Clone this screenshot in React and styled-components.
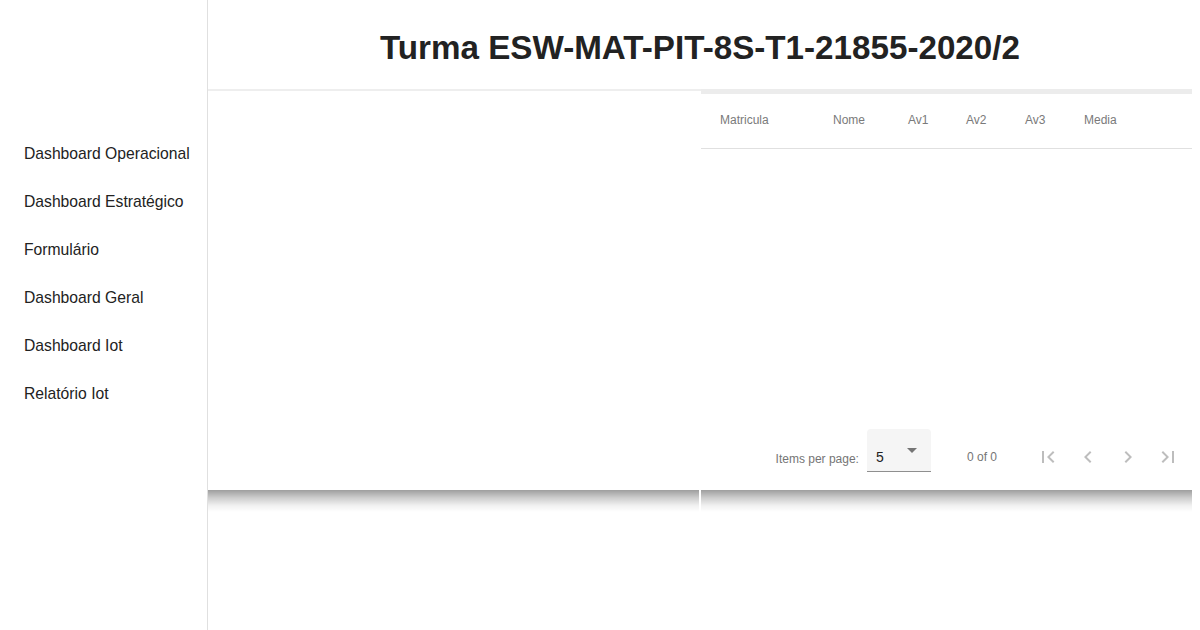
import React from "react";
import styled, { createGlobalStyle } from "styled-components";

const GlobalStyle = createGlobalStyle`
  html, body {
    margin: 0;
    padding: 0;
    background: #fff;
    font-family: "Liberation Sans", Arial, sans-serif;
  }
`;

const Layout = styled.div`
  display: flex;
  width: 1200px;
  height: 630px;
  overflow: hidden;
`;

const Sidebar = styled.nav`
  width: 207px;
  flex-shrink: 0;
  border-right: 1px solid #e0e0e0;
  padding-top: 130px;
  box-sizing: content-box;
`;

const NavItem = styled.a`
  display: flex;
  align-items: center;
  height: 48px;
  padding-left: 24px;
  font-size: 15.7px;
  color: #222;
  text-decoration: none;
`;

const Main = styled.main`
  flex: 1;
  padding-right: 8px;
  display: flex;
  flex-direction: column;
`;

const Header = styled.header`
  height: 89px;
  border-bottom: 2px solid #eeeeee;
  display: flex;
  align-items: center;
  justify-content: center;
`;

const Title = styled.h1`
  margin: 0;
  font-size: 33.2px;
  font-weight: 700;
  color: #222;
  padding-top: 6px;
`;

const Row = styled.div`
  display: flex;
  gap: 2px;
`;

const Card = styled.section`
  flex: 1;
  position: relative;
  height: ${(p) => (p.$table ? 401 : 399)}px;
  margin-top: ${(p) => (p.$table ? -2 : 0)}px;
  background: #fff;
  display: flex;
  flex-direction: column;
  box-sizing: border-box;
  border-top: ${(p) => (p.$table ? "5px solid #ececec" : "none")};
  padding-bottom: 5px;

  &::after {
    content: "";
    position: absolute;
    top: 100%;
    left: 0;
    right: 0;
    height: 22px;
    background: linear-gradient(
      rgba(0, 0, 0, 0.38),
      rgba(0, 0, 0, 0.2) 35%,
      rgba(0, 0, 0, 0.06) 70%,
      rgba(0, 0, 0, 0)
    );
  }
`;

const HeadRow = styled.div`
  display: flex;
  align-items: center;
  height: 55px;
  padding-left: 19px;
  padding-bottom: 3px;
  box-sizing: border-box;
  border-bottom: 1px solid #e0e0e0;
`;

const HeadCell = styled.div`
  width: ${(p) => p.$w}px;
  font-size: 12px;
  color: #7a7a7a;
`;

const Body = styled.div`
  flex: 1;
`;

const Paginator = styled.div`
  height: 56px;
  display: flex;
  align-items: center;
  justify-content: flex-end;
  padding-right: 4px;
  font-size: 12px;
  color: #757575;
`;

const PageLabel = styled.span`
  margin-right: 8px;
  padding-top: 3px;
`;

const Select = styled.div`
  width: 64px;
  height: 43px;
  box-sizing: border-box;
  background: #f5f5f5;
  border-radius: 4px 4px 0 0;
  border-bottom: 1px solid #8f8f8f;
  position: relative;
  margin-top: -13px;
  padding: 20px 0 0 9px;
  font-size: 14px;
  color: #222;
`;

const Arrow = styled.span`
  position: absolute;
  right: 14px;
  top: 19px;
  width: 0;
  height: 0;
  border-left: 5px solid transparent;
  border-right: 5px solid transparent;
  border-top: 5px solid #757575;
`;

const Range = styled.span`
  margin: 0 31px 0 36px;
`;

const IconButton = styled.button`
  width: 40px;
  height: 40px;
  border: none;
  background: none;
  padding: 0;
  display: flex;
  align-items: center;
  justify-content: center;
  color: rgba(0, 0, 0, 0.26);
`;

const Icon = ({ d }) => (
  <svg width="24" height="24" viewBox="0 0 24 24" fill="currentColor">
    <path d={d} />
  </svg>
);

const icons = [
  "M18.41 16.59L13.82 12l4.59-4.59L17 6l-6 6 6 6zM6 6h2v12H6z",
  "M15.41 7.41L14 6l-6 6 6 6 1.41-1.41L10.83 12z",
  "M10 6L8.59 7.41 13.17 12l-4.58 4.59L10 18l6-6z",
  "M5.59 7.41L10.18 12l-4.59 4.59L7 18l6-6-6-6zM16 6h2v12h-2z",
];

const links = [
  "Dashboard Operacional",
  "Dashboard Estratégico",
  "Formulário",
  "Dashboard Geral",
  "Dashboard Iot",
  "Relatório Iot",
];

const columns = [
  ["Matricula", 113],
  ["Nome", 75],
  ["Av1", 58],
  ["Av2", 59],
  ["Av3", 59],
  ["Media", 80],
];

export default function App() {
  return (
    <Layout>
      <GlobalStyle />
      <Sidebar>
        {links.map((l) => (
          <NavItem key={l}>{l}</NavItem>
        ))}
      </Sidebar>
      <Main>
        <Header>
          <Title>Turma ESW-MAT-PIT-8S-T1-21855-2020/2</Title>
        </Header>
        <Row>
          <Card />
          <Card $table>
            <HeadRow>
              {columns.map(([name, w]) => (
                <HeadCell key={name} $w={w}>
                  {name}
                </HeadCell>
              ))}
            </HeadRow>
            <Body />
            <Paginator>
              <PageLabel>Items per page:</PageLabel>
              <Select>
                5
                <Arrow />
              </Select>
              <Range>0 of 0</Range>
              {icons.map((d) => (
                <IconButton key={d}>
                  <Icon d={d} />
                </IconButton>
              ))}
            </Paginator>
          </Card>
        </Row>
      </Main>
    </Layout>
  );
}
